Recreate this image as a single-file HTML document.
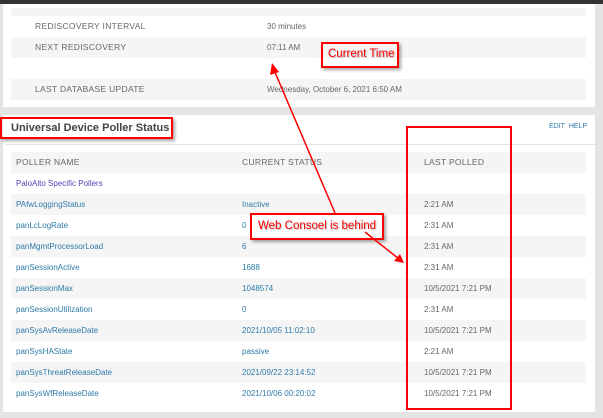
<!DOCTYPE html>
<html><head><meta charset="utf-8"><style>
*{margin:0;padding:0;box-sizing:border-box}
body{width:603px;height:418px;background:#e4e4e4;position:relative;overflow:hidden;font-family:"Liberation Sans",sans-serif;font-size:8px;color:#666}
.topbar{position:absolute;left:0;top:0;width:603px;height:4px;background:#333}
.panel{position:absolute;left:3px;width:592px;background:#fff}
.row{position:absolute;left:8px;width:575px;height:21px;line-height:21px}
.g{background:#f5f5f5}
.a{position:absolute}
.u{font-size:8.5px;letter-spacing:0.3px}
.lk{color:#2e7aa8}
.red{position:absolute;border:2px solid #f00;box-shadow:2px 2px 3px rgba(0,0,0,.35)}
.rt{color:#f00;font-size:11.5px;position:absolute;text-shadow:1px 1px 1px rgba(0,0,0,.25);white-space:nowrap}
</style></head><body>
<div class="topbar"></div>
<div class="panel" style="top:4px;height:103px">
  <div class="row g" style="top:4px;height:8px;left:8px"></div>
  <div class="row" style="top:12px"><span class="a u" style="left:24px">REDISCOVERY INTERVAL</span><span class="a" style="left:256px">30 minutes</span></div>
  <div class="row g" style="top:33px"><span class="a u" style="left:24px">NEXT REDISCOVERY</span><span class="a" style="left:256px">07:11 AM</span></div>
  <div class="row g" style="top:75px"><span class="a u" style="left:24px">LAST DATABASE UPDATE</span><span class="a" style="left:256px">Wednesday, October 6, 2021 6:50 AM</span></div>
</div>
<div class="panel" style="top:115px;height:297px">
  <div class="a" style="left:8px;top:7px;font-size:11px;font-weight:bold;color:#444">Universal Device Poller Status</div>
  <div class="a lk" style="left:546px;top:8px;font-size:7px">EDIT&nbsp; HELP</div>
  <div class="a" style="left:3px;top:29px;width:589px;height:1px;background:#e2e2e2"></div>
  <div class="row g" style="top:37px"><span class="a u" style="left:5px">POLLER NAME</span><span class="a u" style="left:231px">CURRENT STATUS</span><span class="a u" style="left:413px">LAST POLLED</span></div>
  <div class="row" style="top:58px"><span class="a" style="left:5px;color:#5a3fb8">PaloAlto Specific Pollers</span></div>
  <div class="row g" style="top:79px"><span class="a lk" style="left:5px">PAfwLoggingStatus</span><span class="a lk" style="left:231px">Inactive</span><span class="a" style="left:413px">2:21 AM</span></div>
  <div class="row" style="top:100px"><span class="a lk" style="left:5px">panLcLogRate</span><span class="a lk" style="left:231px">0</span><span class="a" style="left:413px">2:31 AM</span></div>
  <div class="row g" style="top:121px"><span class="a lk" style="left:5px">panMgmtProcessorLoad</span><span class="a lk" style="left:231px">6</span><span class="a" style="left:413px">2:31 AM</span></div>
  <div class="row" style="top:142px"><span class="a lk" style="left:5px">panSessionActive</span><span class="a lk" style="left:231px">1688</span><span class="a" style="left:413px">2:31 AM</span></div>
  <div class="row g" style="top:163px"><span class="a lk" style="left:5px">panSessionMax</span><span class="a lk" style="left:231px">1048574</span><span class="a" style="left:413px">10/5/2021 7:21 PM</span></div>
  <div class="row" style="top:184px"><span class="a lk" style="left:5px">panSessionUtilization</span><span class="a lk" style="left:231px">0</span><span class="a" style="left:413px">2:31 AM</span></div>
  <div class="row g" style="top:205px"><span class="a lk" style="left:5px">panSysAvReleaseDate</span><span class="a lk" style="left:231px">2021/10/05 11:02:10</span><span class="a" style="left:413px">10/5/2021 7:21 PM</span></div>
  <div class="row" style="top:226px"><span class="a lk" style="left:5px">panSysHAState</span><span class="a lk" style="left:231px">passive</span><span class="a" style="left:413px">2:21 AM</span></div>
  <div class="row g" style="top:247px"><span class="a lk" style="left:5px">panSysThreatReleaseDate</span><span class="a lk" style="left:231px">2021/09/22 23:14:52</span><span class="a" style="left:413px">10/5/2021 7:21 PM</span></div>
  <div class="row" style="top:268px"><span class="a lk" style="left:5px">panSysWfReleaseDate</span><span class="a lk" style="left:231px">2021/10/06 00:20:02</span><span class="a" style="left:413px">10/5/2021 7:21 PM</span></div>
</div>
<div class="red" style="left:321px;top:42px;width:78px;height:26px"><span class="rt" style="left:5px;top:4px">Current Time</span></div>
<div class="red" style="left:0px;top:117px;width:173px;height:22px"></div>
<div class="red" style="left:406px;top:126px;width:106px;height:284px;box-shadow:none"></div>
<div class="red" style="left:250px;top:213px;width:134px;height:27px"><span class="rt" style="left:6px;top:5px">Web Consoel is behind</span></div>
<svg class="a" style="left:0;top:0" width="603" height="418">
<line x1="335" y1="213" x2="274" y2="70" stroke="#f00" stroke-width="1.5"/>
<polygon points="272,63 270,75 279,72" fill="#f00"/>
<line x1="365" y1="232" x2="399" y2="259" stroke="#f00" stroke-width="1.5"/>
<polygon points="404,263 394,261 400,254" fill="#f00"/>
</svg>
</body></html>
